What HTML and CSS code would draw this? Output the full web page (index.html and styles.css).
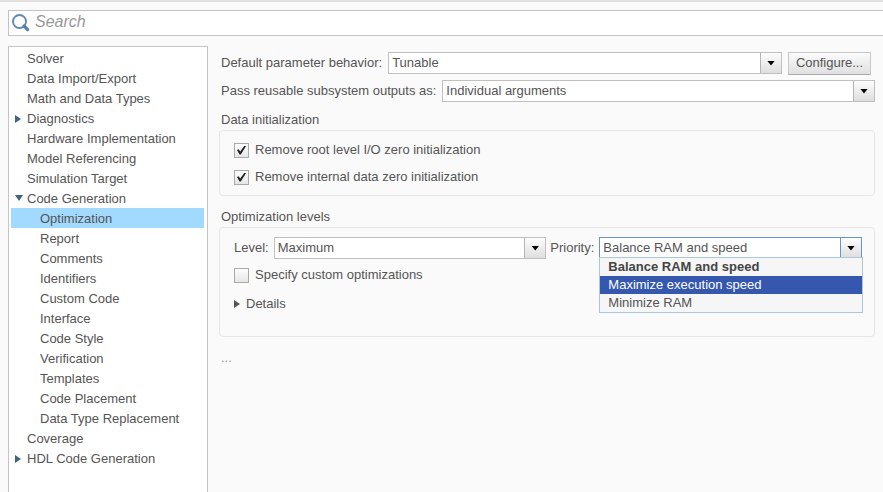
FILE: index.html
```html
<!DOCTYPE html>
<html lang="en">
<head>
<meta charset="utf-8">
<title>Configuration Parameters</title>
<link rel="stylesheet" href="styles.css">
</head>
<body>
<div class="app">
  <div class="search">
    <svg class="search-icon" viewBox="0 0 18 18" aria-hidden="true">
      <circle cx="7.5" cy="7.5" r="6.5" fill="none" stroke="#6288b5" stroke-width="1.9"/>
      <path d="M12 12L15.6 15.6" stroke="#5580b2" stroke-width="3.2" stroke-linecap="round"/>
    </svg>
    <input class="search-input" type="search" placeholder="Search" aria-label="Search">
  </div>
  <div class="body">
    <nav class="tree" aria-label="Categories">
      <a class="node" href="#">Solver</a>
      <a class="node" href="#">Data Import/Export</a>
      <a class="node" href="#">Math and Data Types</a>
      <a class="node closed" href="#">Diagnostics</a>
      <a class="node" href="#">Hardware Implementation</a>
      <a class="node" href="#">Model Referencing</a>
      <a class="node" href="#">Simulation Target</a>
      <a class="node open" href="#">Code Generation</a>
      <a class="node child selected" href="#">Optimization</a>
      <a class="node child" href="#">Report</a>
      <a class="node child" href="#">Comments</a>
      <a class="node child" href="#">Identifiers</a>
      <a class="node child" href="#">Custom Code</a>
      <a class="node child" href="#">Interface</a>
      <a class="node child" href="#">Code Style</a>
      <a class="node child" href="#">Verification</a>
      <a class="node child" href="#">Templates</a>
      <a class="node child" href="#">Code Placement</a>
      <a class="node child" href="#">Data Type Replacement</a>
      <a class="node" href="#">Coverage</a>
      <a class="node closed" href="#">HDL Code Generation</a>
    </nav>
    <main class="pane">
      <div class="row">
        <label for="behavior">Default parameter behavior:</label>
        <div class="combo">
          <select id="behavior"><option>Tunable</option></select>
          <span class="arrow"></span>
        </div>
        <button class="configure" type="button">Configure...</button>
      </div>
      <div class="row">
        <label for="outputs">Pass reusable subsystem outputs as:</label>
        <div class="combo">
          <select id="outputs"><option>Individual arguments</option></select>
          <span class="arrow"></span>
        </div>
      </div>
      <h2 class="heading">Data initialization</h2>
      <section class="group checks">
        <label class="check"><input type="checkbox" checked>Remove root level I/O zero initialization</label>
        <label class="check"><input type="checkbox" checked>Remove internal data zero initialization</label>
      </section>
      <h2 class="heading levels-heading">Optimization levels</h2>
      <section class="group levels">
        <div class="pair">
          <label for="level">Level:</label>
          <div class="combo">
            <select id="level"><option>Maximum</option></select>
            <span class="arrow"></span>
          </div>
          <label for="priority">Priority:</label>
          <div class="combo active">
            <select id="priority"><option>Balance RAM and speed</option></select>
            <span class="arrow"></span>
            <ul class="menu" role="listbox" aria-label="Priority">
              <li class="current" role="option">Balance RAM and speed</li>
              <li class="hover" role="option" aria-selected="true">Maximize execution speed</li>
              <li role="option">Minimize RAM</li>
            </ul>
          </div>
        </div>
        <label class="check"><input type="checkbox">Specify custom optimizations</label>
        <button class="details" type="button">Details</button>
      </section>
      <p class="more">...</p>
    </main>
  </div>
</div>
</body>
</html>
```
FILE: styles.css
```css
* { box-sizing: border-box; }

body {
  margin: 0;
  background: #fafafa;
  color: #555;
  font: 13px/20px "Liberation Sans", Arial, sans-serif;
}

select, input, button { font: inherit; color: inherit; }

.app {
  display: flex;
  flex-direction: column;
  height: 100vh;
  overflow: hidden;
  border-top: 2px solid #e1e1e1;
  padding: 8px 0 0 8px;
}

.search {
  display: flex;
  flex: none;
  align-items: center;
  height: 26px;
  padding-left: 3px;
  background: #fff;
  border: 1px solid #c4c4c4;
  border-right: 0;
}
.search-icon { width: 18px; height: 18px; }
.search-input {
  flex: 1;
  height: 20px;
  margin: 0 0 3px 5px;
  padding: 0;
  border: 0;
  outline: 0;
  background: none;
  font-size: 16px;
  font-style: italic;
}
.search-input::placeholder { color: #999; opacity: 1; }

.body {
  display: flex;
  flex: 1;
  min-height: 0;
  margin-top: 10px;
}

.tree {
  flex: none;
  width: 200px;
  padding: 1px 3px 0 2px;
  overflow: hidden;
  background: #fff;
  border: 1px solid #c4c4c4;
  border-bottom: 0;
}
.node {
  display: flex;
  align-items: center;
  height: 20px;
  padding: 2px 0 0 16px;
  color: #555;
  text-decoration: none;
  white-space: nowrap;
}
.child { padding-left: 29px; }
.selected { background: #a2daff; }
.closed, .open { padding-left: 4px; }
.closed::before, .open::before {
  content: "";
  flex: none;
  width: 8px;
  height: 8px;
  margin-right: 4px;
  background: #46617f;
  clip-path: polygon(0 0, 6px 4px, 0 8px);
}
.open::before { clip-path: polygon(0 0, 8px 0, 4px 6px); }

.pane {
  flex: 1;
  min-width: 0;
  padding: 6px 8px 0 11px;
}

.row, .pair { display: flex; align-items: center; }
.row { height: 22px; padding-left: 2px; }
.row + .row { margin-top: 6px; }
.row label { margin-right: 6px; }

.combo {
  position: relative;
  display: flex;
  flex: 1;
  height: 22px;
  background: #fff;
  border: 1px solid #c0c0c0;
}
.combo select {
  flex: 1;
  width: 100%;
  min-width: 0;
  padding: 0 0 1px 3px;
  appearance: none;
  border: 0;
  outline: 0;
  background: none;
}
.arrow {
  display: flex;
  flex: none;
  align-items: center;
  justify-content: center;
  width: 21px;
  border-left: 1px solid #b4b4b4;
  background: linear-gradient(#fdfdfd, #dedede);
  pointer-events: none;
}
.arrow::before {
  content: "";
  width: 8px;
  height: 5px;
  background: #000;
  clip-path: polygon(0 0, 100% 0, 50% 100%);
}

.configure {
  width: 83px;
  height: 23px;
  margin: 0 4px 0 6px;
  padding: 0;
  border: 1px solid #c8c8c8;
  border-bottom-color: #aaa;
  background: linear-gradient(#fbfbfb, #e0e0e0);
  white-space: nowrap;
}

.heading {
  margin: 8px 0 0;
  padding-left: 2px;
  font-size: 13px;
  line-height: 20px;
  font-weight: 400;
}
.group {
  border: 1px solid #e6e6e6;
  border-radius: 4px;
  padding-left: 14px;
}
.checks {
  display: flex;
  flex-direction: column;
  gap: 7px;
  padding-top: 9px;
  padding-bottom: 8px;
}
.levels-heading { margin-top: 11px; }
.levels { padding: 9px 12px 22px 14px; }

.check {
  display: flex;
  align-items: center;
  height: 20px;
}
.check input {
  position: relative;
  width: 15px;
  height: 15px;
  margin: 0 6px 0 0;
  appearance: none;
  border: 1px solid #aaa;
  background: linear-gradient(#fdfdfd, #e6e6e6);
}
.check input:checked::after {
  content: "";
  position: absolute;
  inset: 2px;
  background: #222;
  clip-path: polygon(0 50%, 18% 42%, 36% 66%, 84% 0, 100% 8%, 42% 100%, 28% 100%);
}

.pair > label { margin-right: 5px; }
.pair .combo + label { margin: 0 5px 0 4px; }
.pair .combo { flex: 273 1 0; }
.pair .active { flex-grow: 263; border-color: #6d94c9; }
.active .arrow { border-color: #6d94c9; }
.menu {
  position: absolute;
  top: 19px;
  left: -1px;
  right: -2px;
  z-index: 1;
  margin: 0;
  padding: 0;
  list-style: none;
  background: #f6f6f6;
  border: 1px solid #a9c8e0;
  line-height: 18px;
}
.menu li { padding-left: 8px; white-space: nowrap; }
.menu .current { font-weight: 700; color: #444; }
.menu .hover { background: #3558ae; color: #fff; }

.levels .check { margin-top: 6px; }
.details {
  display: flex;
  align-items: center;
  height: 20px;
  margin-top: 9px;
  padding: 0;
  border: 0;
  background: none;
}
.details::before {
  content: "";
  width: 8px;
  height: 8px;
  margin-right: 4px;
  background: #555;
  clip-path: polygon(0 0, 6px 4px, 0 8px);
}
.more { margin: 11px 0 0 2px; color: #999; }
```
